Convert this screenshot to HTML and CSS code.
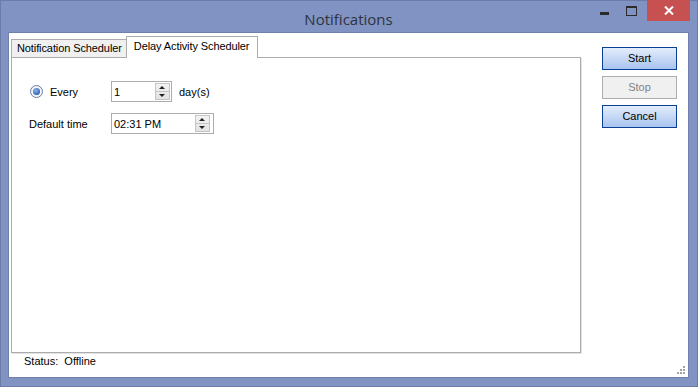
FILE: index.html
```html
<!DOCTYPE html>
<html lang="en">
<head>
    <meta charset="UTF-8">
    <title>Notifications</title>
    <link rel="stylesheet" href="styles.css">
</head>
<body>
    <div class="window">
        <div class="titlebar">
            <div class="title">Notifications</div>
            <div class="caption-buttons">
                <div class="cap-btn">
                    <svg width="10" height="10" viewBox="0 0 10 10"><rect x="0" y="6" width="9" height="3" fill="#2b2b2b"/></svg>
                </div>
                <div class="cap-btn">
                    <svg width="11" height="10" viewBox="0 0 11 10"><rect x="0.5" y="0.5" width="10" height="9" fill="none" stroke="#2b2b2b"/><rect x="0" y="0" width="11" height="2" fill="#2b2b2b"/></svg>
                </div>
                <div class="cap-btn close">
                    <svg width="10" height="9" viewBox="0 0 10 9"><path d="M1 0.5 L9 8.5 M9 0.5 L1 8.5" stroke="#fff" stroke-width="2"/></svg>
                </div>
            </div>
        </div>

        <div class="client">
            <div class="main">
                <div class="tabs">
                    <div class="tab">Notification Scheduler</div>
                    <div class="tab active">Delay Activity Scheduler</div>
                </div>
                <div class="tab-page">
                    <div class="row first">
                        <div class="label-cell">
                            <svg class="radio" width="13" height="13" viewBox="0 0 13 13">
                                <defs>
                                    <radialGradient id="dot" cx="40%" cy="35%" r="70%">
                                        <stop offset="0" stop-color="#8fb5ec"/>
                                        <stop offset="1" stop-color="#2359b4"/>
                                    </radialGradient>
                                </defs>
                                <circle cx="6.5" cy="6.5" r="6" fill="#f4f4f4" stroke="#6b7ca6"/>
                                <circle cx="6.5" cy="6.5" r="3.5" fill="url(#dot)"/>
                            </svg>
                            <span>Every</span>
                        </div>
                        <div class="field num">
                            <span class="value">1</span>
                            <div class="spin"><span class="up"></span><span class="down"></span></div>
                        </div>
                        <span class="unit">day(s)</span>
                    </div>
                    <div class="row">
                        <div class="label-cell plain">Default time</div>
                        <div class="field time">
                            <span class="value">02:31 PM</span>
                            <div class="spin"><span class="up"></span><span class="down"></span></div>
                        </div>
                    </div>
                </div>
                <div class="status">Status:&nbsp;&nbsp;Offline</div>
            </div>

            <div class="actions">
                <div class="btn">Start</div>
                <div class="btn disabled">Stop</div>
                <div class="btn">Cancel</div>
            </div>

            <div class="grip">
                <svg width="9" height="9" viewBox="0 0 9 9" fill="#a3a3a3">
                    <rect x="6" y="0" width="2" height="2"/>
                    <rect x="3" y="3" width="2" height="2"/><rect x="6" y="3" width="2" height="2"/>
                    <rect x="0" y="6" width="2" height="2"/><rect x="3" y="6" width="2" height="2"/><rect x="6" y="6" width="2" height="2"/>
                </svg>
            </div>
        </div>
    </div>
</body>
</html>
```

FILE: styles.css
```css
html, body {
    margin: 0;
    padding: 0;
    background: #fff;
}
body {
    font-family: "Liberation Sans", Arial, sans-serif;
    font-size: 11px;
    color: #000;
}
.window {
    width: 698px;
    height: 387px;
    box-sizing: border-box;
    background: #8193c2;
    border: 1px solid #6b7ca8;
    padding: 0 8px 8px 7px;
    display: flex;
    flex-direction: column;
}
.titlebar {
    height: 31px;
    display: flex;
    position: relative;
}
.title {
    flex: 1;
    text-align: center;
    font-family: "Open Sans", "Noto Sans", sans-serif;
    font-size: 15px;
    color: #2d3340;
    line-height: 36px;
}
.caption-buttons {
    position: absolute;
    right: -1px;
    top: -1px;
    display: flex;
}
.cap-btn {
    width: 26px;
    height: 21px;
    display: flex;
    align-items: center;
    justify-content: center;
}
.cap-btn.close {
    width: 43px;
    margin-left: 3px;
    background: #c75050;
}
.client {
    flex: 1;
    background: #fff;
    border: 1px solid #6f80ad;
    display: flex;
    position: relative;
}
.main {
    width: 570px;
    padding: 3px 0 0 2px;
    display: flex;
    flex-direction: column;
}
.tabs {
    display: flex;
    align-items: flex-end;
    height: 21px;
    position: relative;
    z-index: 1;
    letter-spacing: -0.1px;
}
.tab {
    height: 17px;
    line-height: 17px;
    padding: 0 4px 0 5px;
    background: #f0f0f0;
    border: 1px solid #acacac;
    border-bottom: none;
    color: #000;
}
.tab.active {
    line-height: 19px;
    background: #fff;
    padding: 0 8px 0 7px;
    margin-left: -1px;
    margin-bottom: -1px;
    height: 21px;
}
.tab-page {
    height: 296px;
    border: 1px solid #acacac;
    box-shadow: 1px 1px 0 #e3e3e3;
    background: #fff;
    padding-top: 23px;
    box-sizing: border-box;
}
.row {
    display: flex;
    align-items: center;
    height: 21px;
    margin-bottom: 11px;
}
.label-cell {
    width: 82px;
    padding-left: 17px;
    display: flex;
    align-items: center;
}
.row.first .label-cell {
    padding-left: 18px;
    width: 81px;
}
.radio {
    margin-right: 7px;
}
.field {
    height: 21px;
    box-sizing: border-box;
    border: 1px solid #abadb3;
    display: flex;
    align-items: center;
    justify-content: space-between;
    padding: 0 1px 0 2px;
}
.field.num {
    width: 61px;
}
.field.time {
    width: 103px;
    padding-right: 3px;
}
.spin {
    width: 15px;
    height: 17px;
    display: flex;
    flex-direction: column;
    border: 1px solid #c5c5c5;
    box-sizing: border-box;
    background: linear-gradient(#f3f3f3, #e3e3e3);
}
.spin span {
    flex: 1;
    position: relative;
}
.spin .up {
    border-bottom: 1px solid #c5c5c5;
}
.spin .up::after,
.spin .down::after {
    content: "";
    position: absolute;
    left: 3px;
    border-left: 3px solid transparent;
    border-right: 3px solid transparent;
}
.spin .up::after {
    top: 2px;
    border-bottom: 3px solid #222;
}
.spin .down::after {
    top: 2px;
    border-top: 3px solid #222;
}
.unit {
    margin-left: 7px;
}
.status {
    padding: 2px 0 0 13px;
}
.actions {
    margin-left: 21px;
    padding-top: 14px;
    display: flex;
    flex-direction: column;
    gap: 6px;
}
.btn {
    width: 75px;
    height: 23px;
    box-sizing: border-box;
    border: 1px solid #0d3e96;
    background: linear-gradient(#e4edfb, #a8c4ef);
    text-align: center;
    line-height: 21px;
}
.btn.disabled {
    border-color: #adadad;
    background: #f0f0f0;
    color: #838383;
}
.grip {
    position: absolute;
    right: 2px;
    bottom: 2px;
    line-height: 0;
}
```
